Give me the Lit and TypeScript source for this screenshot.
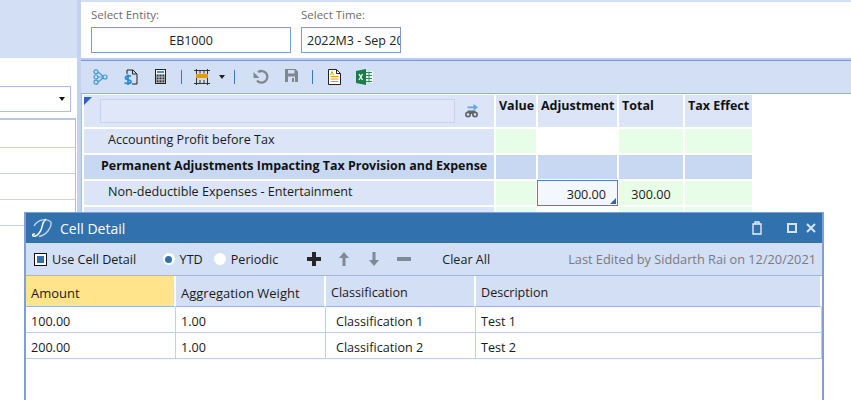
import { LitElement, html, css } from "lit";
import { customElement } from "lit/decorators.js";

@customElement("app-root")
export class AppRoot extends LitElement {
  static styles = css`
    :host { display: block; position: relative; width: 851px; height: 400px; overflow: hidden; background: #fff; font-family: "Open Sans", "Noto Sans", sans-serif; font-size: 12.6px; color: #1a1a1a; }
    .page { display: flex; height: 400px; }
    .left { width: 77px; display: flex; flex-direction: column; flex: none; }
    .left-top { height: 58px; background: #d3dff5; flex: none; }
    .left-mid { height: 60px; flex: none; padding-top: 28px; box-sizing: border-box; }
    .combo { width: 71px; height: 26px; box-sizing: border-box; border: 1px solid #a9c0e8; border-left: none; position: relative; display: flex; align-items: center; justify-content: flex-end; padding-right: 5px; }
    .combo i { width: 0; height: 0; border-left: 3px solid transparent; border-right: 3px solid transparent; border-top: 4px solid #111; }
    .tree { flex: 1; border-top: 2px solid #b5c9ea; border-right: 1px solid #a9bfe6; margin-right: 1px; }
    .tree div { height: 26px; border-bottom: 1px solid #c4d3ee; box-sizing: border-box; }
    .tree div:first-child { height: 28px; }
    .split { width: 4px; flex: none; background: #c3d3ef; }
    .right { flex: 1; display: flex; flex-direction: column; min-width: 0; }
    .strip { height: 2px; background: #d3dff5; flex: none; }
    .filters { height: 56px; flex: none; display: flex; gap: 10px; padding: 5px 0 0 10px; box-sizing: border-box; color: #6d6d6d; font-size: 11.5px; }
    .filter { display: flex; flex-direction: column; gap: 5px; }
    .filter label { height: 15px; line-height: 15px; }
    .field { height: 26px; box-sizing: border-box; border: 1px solid #7c9bd0; color: #222; font-size: 12.5px; line-height: 26px; white-space: nowrap; overflow: hidden; }
    .entity { width: 200px; text-align: center; }
    .time { width: 100px; padding: 0 5px; }
    .band { height: 2px; background: #b9cceb; flex: none; }
    .toolbar { height: 34px; flex: none; box-sizing: border-box; background: #d3dff5; border-top: 1px solid #7b9bd8; border-bottom: 1px solid #93aedd; display: flex; align-items: center; padding-left: 4px; }
    .tb { width: 30px; height: 16px; flex: none; display: flex; justify-content: center; }
    .sep { width: 1px; height: 14px; background: #3b78c4; flex: none; }
    .s1 { margin: 0 12px 0 6px; }
    .s2 { margin: 0 6px 0 9px; }
    .s3 { margin: 0 6px 0 6px; }
    .s2 + .tb { margin-left: 5px; }
    .gridicon { width: 16px; height: 16px; flex: none; }
    .caret { width: 0; height: 0; border-left: 3px solid transparent; border-right: 3px solid transparent; border-top: 4px solid #222; margin-left: 9px; flex: none; }
    .body { flex: 1; border-left: 1px solid #a9bfe6; padding: 1px 0 0 2px; }
    .grid { display: grid; grid-template-columns: 410px 40px 79px 64px 67px; grid-template-rows: 32px 24px 24px 24px 24px; gap: 2px; width: 668px; }
    .cell { box-sizing: border-box; background: #dce5f8; display: flex; align-items: center; white-space: nowrap; }
    .corner { position: relative; padding: 4px 16px; gap: 10px; align-items: flex-start; }
    .tri { position: absolute; left: 0; top: 2px; width: 0; height: 0; border-top: 8px solid #2e62c4; border-right: 8px solid transparent; }
    .search { width: 358px; height: 24px; box-sizing: border-box; border: 1px solid #c6d4ee; background: #dfe7f8; }
    .bin { width: 13px; height: 15px; margin-top: 4px; flex: none; }
    .hd { font-weight: 700; font-size: 12.5px; align-items: flex-start; padding: 2px 0 0 3px; color: #111; }
    .label { padding: 0 0 4px 24px; }
    .green { background: #e8fde8; }
    .white { background: #fff; }
    .sec { background: #c9d8f2; }
    .sec.heading { font-weight: 700; padding: 0 0 4px 17px; color: #111; font-size: 12.48px; }
    .num { justify-content: flex-end; padding: 2px 11px 0 0; }
    .sel { background: #f3f8ff; border: 1px solid #4f7fd0; position: relative; margin: -1px; }
    .sel::after { content: ""; position: absolute; right: 1px; bottom: 1px; width: 0; height: 0; border-bottom: 6px solid #2e62c4; border-left: 6px solid transparent; }
    .center { justify-content: center; padding-top: 2px; }

    .dialog { position: absolute; left: 24px; top: 212px; width: 800px; height: 188px; box-sizing: border-box; background: #fff; border: 1px solid #7f9fd6; border-width: 1px 2px 0 2px; display: flex; flex-direction: column; }
    .title { height: 30px; flex: none; background: #3171ae; color: #fff; display: flex; align-items: center; font-size: 14px; padding: 0 6px 0 6px; }
    .logo { width: 20px; height: 20px; margin-right: 8px; flex: none; }
    .title span { flex: 1; }
    .clip { width: 10px; height: 14px; margin-right: 25px; flex: none; }
    .max { width: 10px; height: 10px; box-sizing: border-box; border: 2px solid #d7e3f5; margin-right: 9px; flex: none; }
    .close { width: 10px; height: 10px; flex: none; }
    .dbar { height: 33px; flex: none; box-sizing: border-box; background: #d3dff5; border-bottom: 1px solid #9db5e0; display: flex; align-items: center; padding: 0 6px 0 8px; font-size: 12.6px; }
    .check { width: 13px; height: 13px; box-sizing: border-box; border: 1px solid #111; padding: 2px; margin-right: 5px; flex: none; background: #fff; }
    .check i { display: block; width: 100%; height: 100%; background: #3171ae; }
    .radio { width: 12px; height: 12px; border-radius: 50%; background: #fff; box-sizing: border-box; flex: none; display: flex; align-items: center; justify-content: center; margin-right: 5px; }
    .radio i { width: 7px; height: 7px; border-radius: 50%; background: #3171ae; }
    .m1 { margin-left: 26.4px; }
    .m2 { margin-left: 11px; }
    .ops { display: flex; align-items: center; gap: 14px; margin-left: 27.5px; }
    .ops svg { width: 16px; height: 16px; flex: none; }
    .clear { margin-left: 30.5px; color: #222; }
    .edited { margin-left: auto; color: #7a7a80; font-size: 12.75px; }
    .table { display: grid; grid-template-columns: 150px 150px 150px 346px; margin-right: 1px; font-size: 12.6px; }
    .th { height: 31px; box-sizing: border-box; background: #d3dff5; border-right: 2px solid #fff; border-bottom: 1px solid #9db5e0; padding: 3px 5px 0; display: flex; align-items: center; }
    .th.sort { background: #ffe48b; }
    .th.wide { font-size: 13px; }
    .td { height: 26px; box-sizing: border-box; border-right: 1px solid #bccfec; border-bottom: 1px solid #bccfec; padding: 3px 5px 0; display: flex; align-items: center; }
    .th:last-child { border-right: 1px solid #fff; }
    .td.ind { padding-left: 10px; }
  `;

  render() {
    return html`
      <div class="page">
        <div class="left">
          <div class="left-top"></div>
          <div class="left-mid"><div class="combo"><i></i></div></div>
          <div class="tree"><div></div><div></div><div></div><div></div></div>
        </div>
        <div class="split"></div>
        <div class="right">
          <div class="strip"></div>
          <div class="filters">
            <div class="filter"><label>Select Entity:</label><div class="field entity">EB1000</div></div>
            <div class="filter"><label>Select Time:</label><div class="field time">2022M3 - Sep 20</div></div>
          </div>
          <div class="band"></div>
          <div class="toolbar">
            <div class="tb"><svg width="15" height="16" viewBox="0 0 15 16" fill="none" stroke="#3f97d6" stroke-width="1.2"><circle cx="3" cy="2.8" r="2"/><circle cx="3" cy="8" r="2"/><circle cx="3" cy="13.2" r="2"/><circle cx="12" cy="8" r="2"/><path d="M5 3 10 7M5 8h5M5 13l5-4"/></svg></div>
            <div class="tb"><svg width="15" height="16" viewBox="0 0 15 16" fill="none"><path d="M4 5V1h6l4 4v10H9" stroke="#222" stroke-width="1"/><path d="M9.500 1v4h4" stroke="#222" stroke-width="1"/><path d="M8 7.500C7 6.500 2.500 6.500 2.500 9s5.500 1.500 5.500 3.800-5 2-6.500.8M5 5.500v10.500" stroke="#2a8cd6" stroke-width="1.800"/></svg></div>
            <div class="tb"><svg width="11" height="15" viewBox="0 0 11 15"><rect x=".5" y=".5" width="10" height="14" fill="#fff" stroke="#222"/><rect x="2" y="2" width="7" height="2" fill="#3f97d6"/><path d="M1.500 5.500h8v8h-8z" fill="#333"/><path d="M1.500 8h8M1.500 10.800h8M4 5.500v8M7 5.500v8" stroke="#d3dff5" stroke-width=".8"/></svg></div>
            <div class="sep s1"></div>
            <svg class="gridicon" viewBox="0 0 16 16" fill="none" stroke="#333"><path d="M0 1.500h16M0 14.500h16M2.500 0v16M13.500 0v16M6 1.500v3M10 1.500v3M6 9.500v5M10 9.500v5"/><rect x="2" y="5" width="12" height="4" fill="#e49b0f" stroke="none"/><rect x="3" y="9" width="10" height="2" fill="#f0d9a8" stroke="none"/></svg>
            <i class="caret"></i>
            <div class="sep s2"></div>
            <div class="tb"><svg width="16" height="15" viewBox="0 0 16 15" fill="none"><path d="M5 3.200A5.800 5.800 0 1 1 4 11.500" stroke="#7f8890" stroke-width="2.300"/><path d="M.5 3v6h6z" fill="#7f8890"/></svg></div>
            <div class="tb"><svg width="13" height="13" viewBox="0 0 13 13"><path d="M0 0h10.500L13 2.500V13H0z" fill="#7f8890"/><rect x="3" y="1" width="6.500" height="3.500" fill="#d3dff5"/><rect x="3" y="7.500" width="7" height="5.500" fill="#d3dff5"/><rect x="7" y="9" width="2" height="4" fill="#7f8890"/></svg></div>
            <div class="sep s3"></div>
            <div class="tb"><svg width="13" height="16" viewBox="0 0 13 16" fill="none"><path d="M.5.500h8l4 4v11H.5z" fill="#fff" stroke="#222"/><path d="M8.500.500v4h4" stroke="#222"/><path d="M2.500 6 4 2.500 5.500 6" stroke="#e49b0f"/><path d="M2.500 7.500h8M2.500 10h8M2.500 12.500h8" stroke="#e49b0f" stroke-width="1"/></svg></div>
            <div class="tb"><svg width="17" height="16" viewBox="0 0 17 16"><path d="M9 2h8v12H9z" fill="#f4f8f4"/><path d="M10 3.500h6M10 6.500h6M10 9.500h6M10 12.500h6M13 2.500v11" stroke="#2f8a57" fill="none"/><path d="M0 2 10 0v16L0 14z" fill="#1f7a4a"/><path d="M3 5l3.500 6M6.500 5 3 11" stroke="#fff" stroke-width="1.300" fill="none"/></svg></div>
          </div>
          <div class="body">
            <div class="grid">
              <div class="cell corner"><i class="tri"></i><div class="search"></div>
                <svg class="bin" viewBox="0 0 13 15"><path d="M2.500 3.500h6V1L13 4.200 8.500 7.500V5.200h-6z" fill="#5ba8e6"/><circle cx="3" cy="11.500" r="3" fill="#63666c"/><circle cx="10" cy="11.500" r="3" fill="#63666c"/><rect x="2.500" y="7.500" width="8" height="3.500" fill="#63666c"/><circle cx="3" cy="11.500" r="1.300" fill="#dce5f8"/><circle cx="10" cy="11.500" r="1.300" fill="#dce5f8"/></svg>
              </div>
              <div class="cell hd">Value</div>
              <div class="cell hd">Adjustment</div>
              <div class="cell hd">Total</div>
              <div class="cell hd">Tax Effect</div>

              <div class="cell label">Accounting Profit before Tax</div>
              <div class="cell green"></div><div class="cell white"></div><div class="cell green"></div><div class="cell green"></div>

              <div class="cell sec heading">Permanent Adjustments Impacting Tax Provision and Expense</div>
              <div class="cell sec"></div><div class="cell sec"></div><div class="cell sec"></div><div class="cell sec"></div>

              <div class="cell label">Non-deductible Expenses - Entertainment</div>
              <div class="cell green"></div><div class="cell num sel">300.00</div><div class="cell green center">300.00</div><div class="cell green"></div>

              <div class="cell"></div>
              <div class="cell green"></div><div class="cell white"></div><div class="cell green"></div><div class="cell green"></div>
            </div>
          </div>
        </div>
      </div>

      <div class="dialog">
        <div class="title">
          <svg class="logo" viewBox="0 0 20 20" fill="none"><path d="M19 4C15 0 6 1 2 8M19 4C20 10 14 17 7 18.500" stroke="#c3d5e9" stroke-width="1.400"/><path d="M14 1C9 5 11 9 8.500 13S4 19 1 18C-.5 17 1 15.500 3 16" stroke="#f2f6fb" stroke-width="1.500"/></svg>
          <span>Cell Detail</span>
          <svg class="clip" viewBox="0 0 10 14" fill="none" stroke="#eaf1fa" stroke-width="1.300"><path d="M1 3h8v10H1zM3 3V1h4v2"/></svg>
          <i class="max"></i>
          <svg class="close" viewBox="0 0 10 10" stroke="#d7e3f5" stroke-width="2"><path d="M1 1l8 8M9 1 1 9"/></svg>
        </div>
        <div class="dbar">
          <div class="check"><i></i></div>
          <span>Use Cell Detail</span>
          <div class="radio m1"><i></i></div><span>YTD</span>
          <div class="radio m2"></div><span>Periodic</span>
          <div class="ops">
            <svg viewBox="0 0 16 16"><path d="M6 1h4v5h5v4h-5v5H6v-5H1V6h5z" fill="#26262a"/></svg>
            <svg viewBox="0 0 16 16"><path d="M8 1l5 6H9.500v8h-3V7H3z" fill="#7f8a96"/></svg>
            <svg viewBox="0 0 16 16"><path d="M8 15l5-6H9.500V1h-3v8H3z" fill="#7f8a96"/></svg>
            <svg viewBox="0 0 16 16"><rect x="1" y="6" width="14" height="4" fill="#7f8a96"/></svg>
          </div>
          <span class="clear">Clear All</span>
          <span class="edited">Last Edited by Siddarth Rai on 12/20/2021</span>
        </div>
        <div class="table">
          <div class="th sort wide">Amount</div><div class="th wide">Aggregation Weight</div><div class="th">Classification</div><div class="th">Description</div>
          <div class="td">100.00</div><div class="td">1.00</div><div class="td ind">Classification 1</div><div class="td">Test 1</div>
          <div class="td">200.00</div><div class="td">1.00</div><div class="td ind">Classification 2</div><div class="td">Test 2</div>
        </div>
      </div>
    `;
  }
}
